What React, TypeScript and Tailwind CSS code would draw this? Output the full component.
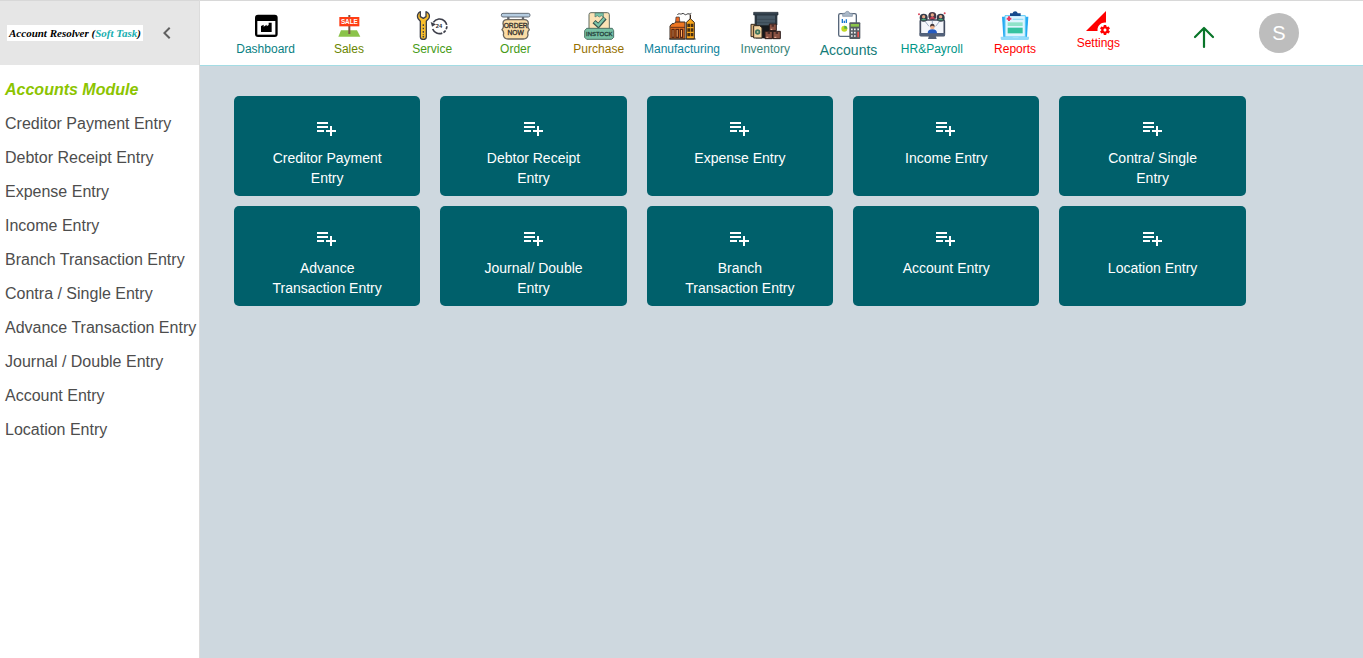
import type { ReactNode } from 'react';
import { MdChevronLeft, MdPermDataSetting, MdPlaylistAdd } from 'react-icons/md';

function Glyph({ children }: { children: ReactNode }) {
  return (
    <svg viewBox="0 0 96 90" className="h-[30px] w-8" aria-hidden="true">
      {children}
    </svg>
  );
}

const DashboardIcon = () => (
  <Glyph>
    <rect x="15" y="14" width="68" height="67" rx="9" fill="#000" />
    <rect x="22" y="33" width="54" height="41" fill="#fff" />
    <path d="M33 66V48l8-4v6l9-6v5l6-4V38h9v28z" fill="#000" />
  </Glyph>
);

const SalesIcon = () => (
  <Glyph>
    <path d="M24 61h48l10 19H16z" fill="#8bc34a" />
    <rect x="46" y="15" width="6" height="57" fill="#795548" />
    <rect x="19" y="21" width="60" height="28" fill="#ff3d14" />
    <text x="49" y="42" textAnchor="middle" fontSize="19" fontWeight="700" fill="#fff" className="font-['Liberation_Sans',sans-serif]">SALE</text>
  </Glyph>
);

const ServiceIcon = () => (
  <Glyph>
    <path d="M13 5C4 9 3 19 6 25c2 4 6 6 7 9v47c0 10 18 10 18 0V34c1-3 6-5 8-10 3-7 0-16-9-19v15l-8 5-9-5z" fill="#fbc02d" stroke="#3d3f4a" strokeWidth="4" strokeLinejoin="round" />
    <path d="M22 43v32" stroke="#3d3f4a" strokeWidth="4" strokeDasharray="5 5" />
    <circle cx="22" cy="80" r="2.500" fill="#3d3f4a" />
    <path d="M52 37a22 22 0 1 1-2 20" fill="none" stroke="#3d3f4a" strokeWidth="5" strokeDasharray="52 4 9 4 9 4 60" />
    <path d="M44 36l4 14 12-7z" fill="#3d3f4a" />
    <text x="69" y="54" textAnchor="middle" fontSize="17" fontWeight="700" fill="#24262c" className="font-['Liberation_Sans',sans-serif]">24</text>
  </Glyph>
);

const OrderIcon = () => (
  <Glyph>
    <path d="M28 19v12M72 19v12" stroke="#64666c" strokeWidth="7" />
    <rect x="7" y="10" width="86" height="11" rx="5" fill="#b5cce0" stroke="#656f7a" strokeWidth="3" />
    <path d="M24 29h52q12 0 12 12-4 10 3 18-7 6-4 16-2 12-14 12H27q-12 0-14-12 3-10-4-16 7-8 3-18 0-12 12-12z" fill="#fbdca5" stroke="#6b665e" strokeWidth="4" strokeLinejoin="round" />
    <text x="50" y="54" textAnchor="middle" fontSize="20" fill="#35322e" stroke="#35322e" className="font-['Liberation_Sans',sans-serif]">ORDER</text>
    <text x="50" y="75" textAnchor="middle" fontSize="20" fill="#35322e" stroke="#35322e" className="font-['Liberation_Sans',sans-serif]">NOW</text>
  </Glyph>
);

const PurchaseIcon = () => (
  <Glyph>
    <rect x="18" y="8" width="61" height="56" rx="6" fill="#fbe2b5" stroke="#5f6a5f" strokeWidth="3" />
    <path d="M36 9h25v12l-6-4-6 4-6-4-7 4z" fill="#7cc5a9" stroke="#4d7468" strokeWidth="2" />
    <path d="M33 35l13 12 20-23" fill="none" stroke="#39564e" strokeWidth="13" />
    <path d="M35 36l11 10 18-21" fill="none" stroke="#7cc5a9" strokeWidth="7" />
    <path d="M11 55h77l4 7v20l-6 6H11l-6-6V62z" fill="#75bfa3" stroke="#4d7468" strokeWidth="3" />
    <text x="49" y="78" textAnchor="middle" fontSize="18" fill="#28453e" stroke="#28453e" className="font-['Liberation_Sans',sans-serif]">INSTOCK</text>
  </Glyph>
);

const ManufacturingIcon = () => (
  <Glyph>
    <path d="M34 15c5-8 9 0 14-4s9 7 14 2 9 3 14-3" fill="none" stroke="#333" strokeWidth="3" />
    <path d="M28 43l2-22h10l2 22" fill="#ed6622" stroke="#333" strokeWidth="2" />
    <path d="M12 48l6-7h6l5-5h28v51H12z" fill="#ee7623" stroke="#3a2a20" strokeWidth="3" />
    <path d="M61 37l12-11 12 11v50H61z" fill="#f9a61a" stroke="#3a2a20" strokeWidth="3" />
    <path d="M73 14v13" stroke="#3a2a20" strokeWidth="4" />
    <path d="M14 52h43" stroke="#6b2f15" strokeWidth="3" />
    <path d="M18 58h6v24h-6zM30 58h7v24h-7zM43 58h7v24h-7z" fill="#ffb066" stroke="#5a2613" strokeWidth="4" />
    <path d="M66 43h4v6h-4zM76 43h4v6h-4zM66 57h4v6h-4zM76 57h4v6h-4zM66 71h4v6h-4zM76 71h4v6h-4z" fill="#ffe27a" stroke="#463014" strokeWidth="4" />
    <path d="M9 87h80" stroke="#333" strokeWidth="3" />
  </Glyph>
);

const InventoryIcon = () => (
  <Glyph>
    <path d="M21 14h60v71H21z" fill="#15181c" />
    <path d="M23 13h56v33H23z" fill="#475865" />
    <path d="M14 7h73v8H14z" fill="#34424e" stroke="#1e2730" strokeWidth="2" />
    <path d="M24 28h54M24 38h54" stroke="#3a4955" strokeWidth="3" />
    <path d="M17 15h7v30h-7zM78 15h7v30h-7z" fill="#2b3640" />
    <path d="M6 43h13v37H6z" fill="#d9b07c" stroke="#35291e" strokeWidth="3" />
    <path d="M14 47h18l7 6v31H14z" fill="#f3d4a2" stroke="#33291f" strokeWidth="3" />
    <circle cx="26" cy="66" r="8" fill="#3e755d" />
    <path d="M23 66h6M26 63v6" stroke="#e5e0ad" strokeWidth="2" />
    <path d="M61 42h21v20H61zM48 64h22v22H48zM72 64h22v22H72z" fill="#8a5243" stroke="#2c1d1b" strokeWidth="3" />
    <path d="M68 43h7v7h-7zM56 65h7v7h-7zM80 65h7v7h-7z" fill="#4b2f2b" />
    <path d="M65 58h5M52 82h6M76 82h6" stroke="#f0b89e" strokeWidth="3" />
  </Glyph>
);

const AccountsIcon = () => (
  <Glyph>
    <rect x="17" y="11" width="53" height="68" rx="5" fill="#fff" stroke="#58677b" strokeWidth="4" />
    <path d="M29 10h7c1-8 13-8 14 0h8v9H29z" fill="#aab8c8" stroke="#78879a" strokeWidth="2" />
    <path d="M26 27h4v12h-4zM32 32h4v7h-4zM38 28h4v11h-4z" fill="#1976d2" />
    <circle cx="34" cy="56" r="9" fill="#c2d824" />
    <path d="M34 56V47a9 9 0 0 1 9 9z" fill="#4caf50" />
    <rect x="49" y="37" width="33" height="50" rx="3" fill="#555b63" />
    <path d="M53 42h25v8H53z" fill="#8bc34a" />
    <path d="M54 58h5M63 58h5M73 58h5M54 68h5M63 68h5M54 78h5M63 78h5" stroke="#f0f1f2" strokeWidth="5" />
    <path d="M73 65h5v17h-5z" fill="#ef5350" />
  </Glyph>
);

const PayrollIcon = () => (
  <Glyph>
    <rect x="13" y="30" width="72" height="47" rx="3" fill="#f4f6fb" stroke="#414b5f" strokeWidth="5" />
    <path d="M11 69h76v9H11z" fill="#52617a" />
    <path d="M39 77h20l3 10H36z" fill="#526077" />
    <path d="M28 35l11 14M70 35L59 49M49 30v11" stroke="#7185a5" strokeWidth="2" />
    <circle cx="49" cy="51" r="7" fill="#efb28e" />
    <path d="M42 50q0-9 7-9t7 9l-7-3z" fill="#453a3c" />
    <path d="M35 70q0-12 14-12t14 12z" fill="#255bc1" />
    <circle cx="23" cy="23" r="12" fill="#343c4a" />
    <circle cx="49" cy="18" r="12" fill="#453746" />
    <circle cx="74" cy="23" r="12" fill="#343c4a" />
    <circle cx="23" cy="20" r="5" fill="#e5a988" />
    <circle cx="49" cy="15" r="5" fill="#e5a988" />
    <circle cx="74" cy="20" r="5" fill="#e5a988" />
    <path d="M14 31q9-11 18 0M65 31q9-11 18 0" fill="#47a978" />
    <path d="M40 26q9-11 18 0" fill="#d74559" />
    <circle cx="9" cy="13" r="3" fill="#d74559" />
    <circle cx="86" cy="10" r="3" fill="#d74559" />
  </Glyph>
);

const ReportsIcon = () => (
  <Glyph>
    <path d="M9 20h79l-4 61H13z" fill="#28aaf3" />
    <path d="M18 17h61v64H18z" fill="#dff5ff" stroke="#56c9f6" strokeWidth="3" />
    <path d="M33 10h8c1-8 14-8 15 0h9v8H33z" fill="#174a8d" />
    <path d="M30 19v14M23 26h14" stroke="#e83962" strokeWidth="6" />
    <path d="M41 28h32" stroke="#9bdcf4" strokeWidth="4" />
    <path d="M26 37h45v11H26z" fill="#8fe3c9" />
    <path d="M26 53h45v17H26z" fill="#35c3a0" />
    <path d="M5 80h34l4 3h14l4-3h29v5q0 6-7 6H12q-7 0-7-6z" fill="#92dafa" />
  </Glyph>
);

const modules = [
  { label: 'Dashboard', Icon: DashboardIcon, style: 'text-xs leading-[18px] text-[#087f83]' },
  { label: 'Sales', Icon: SalesIcon, style: 'text-xs leading-[18px] text-[#6a8500]' },
  { label: 'Service', Icon: ServiceIcon, style: 'text-xs leading-[18px] text-[#479b18]' },
  { label: 'Order', Icon: OrderIcon, style: 'text-xs leading-[18px] text-[#479b18]' },
  { label: 'Purchase', Icon: PurchaseIcon, style: 'text-xs leading-[18px] text-[#957000]' },
  { label: 'Manufacturing', Icon: ManufacturingIcon, style: 'text-xs leading-[18px] text-[#0c829c]' },
  { label: 'Inventory', Icon: InventoryIcon, style: 'text-xs leading-[18px] text-[#398479]' },
  { label: 'Accounts', Icon: AccountsIcon, style: 'text-sm leading-5 text-[#147b78]' },
  { label: 'HR&Payroll', Icon: PayrollIcon, style: 'text-xs leading-[18px] text-[#009688]' },
  { label: 'Reports', Icon: ReportsIcon, style: 'text-xs leading-[18px] text-[#f00]' },
];

const sidebarLinks = [
  'Creditor Payment Entry',
  'Debtor Receipt Entry',
  'Expense Entry',
  'Income Entry',
  'Branch Transaction Entry',
  'Contra / Single Entry',
  'Advance Transaction Entry',
  'Journal / Double Entry',
  'Account Entry',
  'Location Entry',
];

const entries = [
  'Creditor Payment Entry',
  'Debtor Receipt Entry',
  'Expense Entry',
  'Income Entry',
  'Contra/ Single Entry',
  'Advance Transaction Entry',
  'Journal/ Double Entry',
  'Branch Transaction Entry',
  'Account Entry',
  'Location Entry',
];

function Sidebar() {
  return (
    <aside className="w-[200px] shrink-0 overflow-hidden border-r border-[#dcdcdc] bg-white">
      <div className="flex h-[65px] items-center border-t border-[#d8d8d8] bg-[#e6e6e6] pl-[7px]">
        <div className="h-4 w-[136px] bg-white text-center font-['Liberation_Serif',serif] text-[11px] leading-4 font-bold whitespace-nowrap text-black italic">
          Account Resolver (<span className="text-[#16aeb0]">Soft Task</span>)
        </div>
        <button type="button" aria-label="Collapse menu" className="ml-3 text-[#616161]">
          <MdChevronLeft size={24} />
        </button>
      </div>
      <nav aria-label="Accounts" className="pt-2 pl-[5px] text-base leading-[34px] whitespace-nowrap text-[#4d4d4d]">
        <h1 className="font-bold text-[#8cc400] italic">Accounts Module</h1>
        <ul>
          {sidebarLinks.map((link) => (
            <li key={link}>
              <a href="#" className="block">{link}</a>
            </li>
          ))}
        </ul>
      </nav>
    </aside>
  );
}

function TopBar() {
  return (
    <header className="flex h-[66px] border-t border-b border-t-[#d8d8d8] border-b-[#a3dce4] bg-white px-6">
      <nav aria-label="Modules" className="grid flex-1 grid-cols-11 pt-[9px]">
        {modules.map(({ label, Icon, style }) => (
          <a key={label} href="#" className="flex flex-col items-center whitespace-nowrap">
            <Icon />
            <span className={style}>{label}</span>
          </a>
        ))}
        <a href="#" className="flex flex-col items-center whitespace-nowrap text-[#f00]">
          <span className="flex h-[25px] items-end">
            <MdPermDataSetting size={24} />
          </span>
          <span className="text-xs leading-4">Settings</span>
        </a>
      </nav>
      <div className="flex shrink-0 items-center pr-10 pl-[52px]">
        <button type="button" aria-label="Back to top" className="mt-2 text-[#087529]">
          <svg viewBox="0 0 24 24" className="size-6" fill="none" stroke="currentColor" strokeWidth="2.200" strokeLinecap="round" strokeLinejoin="round" aria-hidden="true">
            <path d="M12 22V3M3 12l9-9 9 9" />
          </svg>
        </button>
        <button type="button" aria-label="Profile" className="ml-[43px] size-10 rounded-full bg-[#bdbdbd] text-xl text-white">
          S
        </button>
      </div>
    </header>
  );
}

export default function App() {
  return (
    <div className="flex min-h-screen bg-[#ced8df] font-['Liberation_Sans',Arial,sans-serif]">
      <Sidebar />
      <div className="min-w-0 flex-1">
        <TopBar />
        <main className="pt-[30px]">
          <div className="ml-[34px] grid w-[87%] grid-cols-5 gap-x-5 gap-y-2.5">
            {entries.map((entry) => (
              <button key={entry} type="button" className="flex h-[100px] flex-col items-center rounded-[5px] bg-[#00606b] px-9 pt-5 text-sm leading-5 text-white">
                <MdPlaylistAdd size={24} className="mr-0.5" />
                <span className="pt-2">{entry}</span>
              </button>
            ))}
          </div>
        </main>
      </div>
    </div>
  );
}
